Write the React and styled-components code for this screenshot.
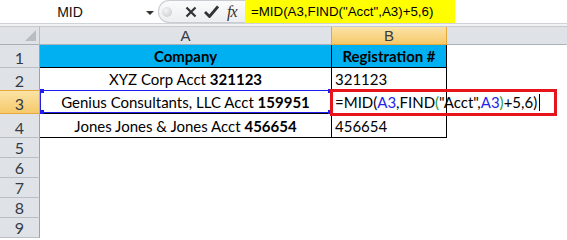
import React from "react";
import styled, { createGlobalStyle } from "styled-components";

const Global = createGlobalStyle`
  html, body { margin: 0; padding: 0; background: #fff; }
  body { font-family: "Lato", "Liberation Sans", sans-serif; }
`;

const Page = styled.div`
  width: 567px;
  height: 240px;
  overflow: hidden;
  background: #fff;
  display: flex;
  flex-direction: column;
`;

const FormulaBar = styled.div`
  height: 23px;
  display: flex;
  align-items: stretch;
  background: #fff;
`;

const NameBox = styled.div`
  width: 158px;
  display: flex;
  align-items: center;
  font-family: "Liberation Sans", sans-serif;
  font-size: 14px;
  color: #111;
`;

const NameText = styled.span`
  width: 140px;
  text-align: center;
`;

const Dropdown = styled.span`
  width: 0;
  height: 0;
  border-left: 4px solid transparent;
  border-right: 4px solid transparent;
  border-top: 4px solid #333;
  margin-left: 6px;
  margin-top: 2px;
`;

const ButtonArea = styled.div`
  width: 87px;
  display: flex;
  align-items: center;
  background: linear-gradient(#fbfbfb, #eceef1);
  border: 1px solid #c9ccd1;
  border-right: none;
  border-radius: 11px 0 0 11px;
  box-sizing: border-box;
  padding-left: 3px;
`;

const Grip = styled.span`
  width: 10px;
  height: 10px;
  border-radius: 50%;
  background: radial-gradient(circle at 40% 35%, #f4f4f4, #c4c6ca);
  margin-right: 9px;
`;

const IconBtn = styled.span`
  width: 20px;
  display: flex;
  align-items: center;
  justify-content: center;
`;

const Fx = styled.span`
  font-family: "Liberation Serif", serif;
  font-style: italic;
  font-size: 16px;
  color: #333;
  letter-spacing: -1px;
  margin-left: 6px;
`;

const FormulaInput = styled.div`
  width: 210px;
  background: #ffff00;
  display: flex;
  align-items: center;
  padding-left: 6px;
  box-sizing: border-box;
  font-family: "Liberation Sans", sans-serif;
  font-size: 13.3px;
  color: #000;
  white-space: nowrap;
`;

const Band = styled.div`
  height: 4px;
  background: #f1f2f4;
  border-top: 1px solid #cfd2d6;
  border-bottom: 1px solid #c6cacf;
  box-sizing: border-box;
`;

const Grid = styled.div`
  display: grid;
  grid-template-columns: 40px 292px 115px 1fr;
  grid-template-rows: 18px 23px 23px 23px 24px 20px 20px 20px 20px 20px;
  font-size: 15px;
`;

const ColHead = styled.div`
  background: ${(p) =>
    p.$sel ? "linear-gradient(#fbe3a6, #f6c96b)" : "#dfe3e8"};
  border-right: 1px solid ${(p) => (p.$sel ? "#e6a93a" : p.$last ? "transparent" : "#b9bec5")};
  border-bottom: 1px solid ${(p) => (p.$sel ? "#e6a93a" : "#a9b0b8")};
  ${(p) => (p.$sel ? "border-left: 1px solid #e6a93a; margin-left: -1px;" : "")}
  box-sizing: border-box;
  display: flex;
  align-items: center;
  justify-content: center;
  color: #333a45;
  font-family: "Liberation Sans", sans-serif;
  font-size: 15px;
  position: relative;
`;

const CornerTri = styled.span`
  position: absolute;
  right: 3px;
  bottom: 3px;
  width: 0;
  height: 0;
  border-left: 11px solid transparent;
  border-bottom: 11px solid #b9bdc3;
`;

const RowHead = styled.div`
  background: ${(p) =>
    p.$sel ? "linear-gradient(#fbe3a6, #f6c96b)" : "#dfe3e8"};
  border-right: 1px solid ${(p) => (p.$sel ? "#e6a93a" : "#9aa2ac")};
  border-bottom: 1px solid ${(p) => (p.$sel ? "#e6a93a" : "#b9bec5")};
  ${(p) => (p.$sel ? "border-top: 1px solid #e6a93a; margin-top: -1px;" : "")}
  box-sizing: border-box;
  display: flex;
  align-items: flex-end;
  justify-content: center;
  color: #333a45;
  font-size: 16px;
  line-height: 19px;
`;

const Cell = styled.div`
  position: relative;
  z-index: ${(p) => (p.$front ? 2 : "auto")};
  box-sizing: border-box;
  background: ${(p) => (p.$head ? "#00b0f0" : "#fff")};
  border-right: ${(p) => (p.$table ? "1px solid #000" : "none")};
  border-bottom: ${(p) => (p.$table ? "1px solid #000" : "none")};
  display: flex;
  align-items: flex-end;
  justify-content: ${(p) => (p.$center ? "center" : "flex-start")};
  padding: 0 3px 1px;
  font-weight: ${(p) => (p.$head ? 700 : 400)};
  color: #000;
  white-space: nowrap;
  line-height: 19px;
`;

const Bold = styled.b`
  font-weight: 700;
`;

const RefBox = styled.div`
  position: absolute;
  inset: -1px 0 0 0;
  border: 1px solid #1e1ef0;
  pointer-events: none;
`;

const Handle = styled.span`
  position: absolute;
  width: 4px;
  height: 4px;
  background: #1e1ef0;
  ${(p) => (p.$top ? "top: -2px;" : "bottom: -2px;")}
  ${(p) => (p.$left ? "left: -1px;" : "right: -2px;")}
`;

const EditBox = styled.div`
  position: absolute;
  left: -2px;
  top: -2px;
  width: 227px;
  height: 27px;
  border: 3px solid #e8141b;
  box-sizing: border-box;
  pointer-events: none;
`;

const EditText = styled.span`
  position: relative;
  z-index: 1;
`;

const Ref = styled.span`
  color: #2525e8;
`;
const Paren = styled.span`
  color: #1f9a3c;
`;
const Caret = styled.span`
  display: inline-block;
  width: 1px;
  height: 17px;
  background: #000;
  margin-left: 2px;
  vertical-align: -3px;
`;

const rows = [5, 6, 7, 8, 9];

export default function App() {
  return (
    <Page>
      <Global />
      <FormulaBar>
        <NameBox>
          <NameText>MID</NameText>
          <Dropdown />
        </NameBox>
        <ButtonArea>
          <Grip />
          <IconBtn>
            <svg width="12" height="12" viewBox="0 0 12 12">
              <path d="M1.5 1.5 L10.5 10.5 M10.5 1.5 L1.5 10.5" stroke="#333" strokeWidth="2.2" />
            </svg>
          </IconBtn>
          <IconBtn>
            <svg width="15" height="13" viewBox="0 0 15 13">
              <path d="M1 7 L5.5 11.5 L14 1.5" stroke="#333" strokeWidth="2.8" fill="none" />
            </svg>
          </IconBtn>
          <Fx>fx</Fx>
        </ButtonArea>
        <FormulaInput>=MID(A3,FIND("Acct",A3)+5,6)</FormulaInput>
      </FormulaBar>
      <Band />
      <Grid>
        <ColHead>
          <CornerTri />
        </ColHead>
        <ColHead>A</ColHead>
        <ColHead $sel>B</ColHead>
        <ColHead $last />

        <RowHead>1</RowHead>
        <Cell $table $head $center>Company</Cell>
        <Cell $table $head $center>Registration #</Cell>
        <Cell />

        <RowHead>2</RowHead>
        <Cell $table $center>
          XYZ Corp Acct&nbsp;<Bold>321123</Bold>
        </Cell>
        <Cell $table>321123</Cell>
        <Cell />

        <RowHead $sel>3</RowHead>
        <Cell $table $center>
          Genius Consultants, LLC Acct&nbsp;<Bold>159951</Bold>
          <RefBox>
            <Handle $top $left />
            <Handle $left />
            <Handle $top />
            <Handle />
          </RefBox>
        </Cell>
        <Cell $table $front>
          <EditText>
            =MID(<Ref>A3</Ref>,FIND<Paren>(</Paren>"Acct",<Ref>A3</Ref>
            <Paren>)</Paren>+5,6)
            <Caret />
          </EditText>
          <EditBox />
        </Cell>
        <Cell />

        <RowHead>4</RowHead>
        <Cell $table $center>
          Jones Jones &amp; Jones Acct&nbsp;<Bold>456654</Bold>
        </Cell>
        <Cell $table>456654</Cell>
        <Cell />

        {rows.map((r) => (
          <React.Fragment key={r}>
            <RowHead>{r}</RowHead>
            <Cell />
            <Cell />
            <Cell />
          </React.Fragment>
        ))}
      </Grid>
    </Page>
  );
}
